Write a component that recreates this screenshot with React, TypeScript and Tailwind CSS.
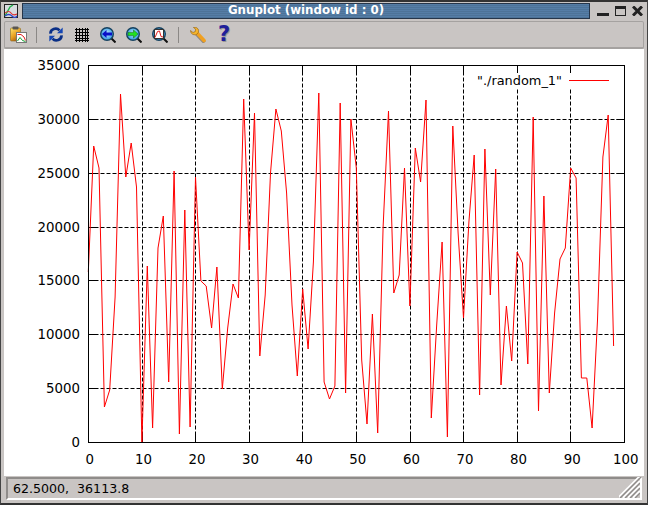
import type { ReactNode } from 'react';

// pixel y of each sample, x = 0..98
const samples = [
  272, 146, 168, 407, 390, 297, 94, 177, 143, 187, 442, 266, 428, 248, 216, 382, 171, 434, 210, 427,
  177, 281, 286, 328, 267, 389, 328, 284, 298, 99, 250, 113, 356, 295, 173, 109, 131, 193, 305, 376,
  289, 349, 262, 93, 382, 399, 386, 103, 393, 119, 168, 360, 424, 314, 433, 227, 111, 293, 275, 168,
  306, 148, 182, 100, 418, 325, 242, 437, 126, 233, 318, 222, 155, 395, 149, 295, 169, 385, 306, 361,
  252, 263, 364, 117, 411, 196, 393, 313, 259, 248, 168, 178, 378, 378, 428, 320, 157, 115, 346,
];

const plot = { left: 88.5, right: 624.5, top: 65.5, bottom: 442.5 };
const xAt = (v: number) => plot.left + (v / 100) * (plot.right - plot.left);
const yAt = (v: number) => plot.bottom - (v / 35000) * (plot.bottom - plot.top);
const xTicks = [0, 10, 20, 30, 40, 50, 60, 70, 80, 90, 100];
const yTicks = [0, 5000, 10000, 15000, 20000, 25000, 30000, 35000];

function Plot() {
  const points = samples.map((y, i) => `${(88.3 + 5.36 * i).toFixed(1)},${y}`).join(' ');
  return (
    <svg viewBox="4 49 640 427" className="block w-[640px] h-[427px]">
      <rect x="4" y="49" width="640" height="427" fill="#fff" />
      {/* grid */}
      {xTicks.slice(1, -1).map((t) => {
        const x = Math.floor(xAt(t)) + 0.5;
        return (
          <g key={t} stroke="#000">
            <line x1={x} x2={x} y1={plot.top} y2={plot.bottom} strokeDasharray="4 2" />
            <line x1={x} x2={x} y1={plot.top} y2={plot.top + 8} />
            <line x1={x} x2={x} y1={plot.bottom - 8} y2={plot.bottom} />
          </g>
        );
      })}
      {yTicks.slice(1, -1).map((t) => {
        const y = Math.floor(yAt(t)) + 0.5;
        return (
          <g key={t} stroke="#000">
            <line x1={plot.left} x2={plot.right} y1={y} y2={y} strokeDasharray="4 2" />
            <line x1={plot.left} x2={plot.left + 8} y1={y} y2={y} />
            <line x1={plot.right - 8} x2={plot.right} y1={y} y2={y} />
          </g>
        );
      })}
      {/* legend box clears the grid */}
      <rect x="472" y="73" width="140" height="15" fill="#fff" />
      <polyline points={points} fill="none" stroke="#ff0000" strokeWidth="1" />
      <rect
        x={plot.left}
        y={plot.top}
        width={plot.right - plot.left}
        height={plot.bottom - plot.top}
        fill="none"
        stroke="#000"
      />
      <g fill="#000" fontSize="13.33" fontFamily="'DejaVu Sans', sans-serif">
        {yTicks.map((t) => (
          <text key={t} x="80" y={Math.floor(yAt(t)) + 5} textAnchor="end">
            {t}
          </text>
        ))}
        {xTicks.map((t) => (
          <text key={t} x={xAt(t) + 1.3} y="464" textAnchor="middle">
            {t}
          </text>
        ))}
        <text x="562" y="85" textAnchor="end" fontSize="12.9">
          "./random_1"
        </text>
      </g>
      <line x1="569" x2="609" y1="80.5" y2="80.5" stroke="#ff0000" />
    </svg>
  );
}

function AppIcon() {
  return (
    <svg viewBox="0 0 14 14" className="w-[14px] h-[14px]">
      <rect x="0.5" y="0.5" width="13" height="13" fill="#d8dce0" stroke="#222" />
      <path d="M1 12 L6 3 L9 1" stroke="#22b14c" strokeWidth="1.4" fill="none" />
      <path d="M1 9 Q5 6 7 9 T13 10" stroke="#e03030" strokeWidth="1.2" fill="none" />
      <path d="M1 12 Q5 9 8 12 T13 12" stroke="#3048c8" strokeWidth="1.4" fill="none" />
    </svg>
  );
}

function ClipboardIcon() {
  return (
    <svg viewBox="0 0 17 17" className="w-[17px] h-[17px]">
      <defs>
        <linearGradient id="clip" x1="0" y1="0" x2="0.6" y2="1">
          <stop offset="0" stopColor="#ffe874" />
          <stop offset="0.6" stopColor="#e8a020" />
          <stop offset="1" stopColor="#a85a10" />
        </linearGradient>
      </defs>
      <rect x="0.5" y="2" width="10" height="13" rx="1" fill="url(#clip)" stroke="#8a6a20" strokeWidth="0.6" />
      <rect x="2.5" y="0.5" width="6" height="3" rx="1" fill="#5a5650" />
      <rect x="6.5" y="6.5" width="10" height="10" fill="#fff" stroke="#777" />
      <path d="M7.5 8.5 L11 8.5 L14 11 L15.5 14.5" stroke="#e02020" fill="none" />
      <path d="M7.5 15 L10 11.5 L12.5 14.5 L15.5 15.5" stroke="#10a030" fill="none" />
    </svg>
  );
}

function RefreshIcon() {
  return (
    <svg viewBox="0 0 14 15" className="w-[14px] h-[15px]" fill="none">
      <path d="M1.6 6.6 A5 4.6 0 0 1 10.5 3.4" stroke="#0a2f86" strokeWidth="2.8" />
      <path d="M8 6.2 L13.7 6.2 L13.7 0.6 Z" fill="#1546b4" />
      <path d="M12.4 8.4 A5 4.6 0 0 1 3.5 11.6" stroke="#0a2f86" strokeWidth="2.8" />
      <path d="M6 8.8 L0.3 8.8 L0.3 14.4 Z" fill="#1546b4" />
    </svg>
  );
}

function GridIcon() {
  return (
    <svg viewBox="0 0 14 14" className="w-[14px] h-[14px]" stroke="#000">
      {[1.5, 4.5, 7.5, 10.5, 12.5].map((p) => (
        <g key={p}>
          <line x1={p} x2={p} y1="0" y2="14" />
          <line y1={p} y2={p} x1="0" x2="14" />
        </g>
      ))}
    </svg>
  );
}

function Lens({ id, children }: { id: string; children: ReactNode }) {
  return (
    <svg viewBox="0 0 16 16" className="w-4 h-4">
      <defs>
        <radialGradient id={id} cx="0.5" cy="0.45" r="0.6">
          <stop offset="0" stopColor="#c4ecff" />
          <stop offset="1" stopColor="#1c8ee0" />
        </radialGradient>
      </defs>
      <line x1="11.5" y1="11.5" x2="15.5" y2="15.5" stroke="#111" strokeWidth="2" />
      <circle cx="7" cy="7" r="6.3" fill={`url(#${id})`} stroke="#17425f" strokeWidth="1.4" />
      {children}
    </svg>
  );
}

function Wrench() {
  return (
    <svg viewBox="0 0 16 16" className="w-4 h-4">
      <path d="M7 6 L15 14.5" stroke="#8a8580" strokeWidth="3.4" transform="translate(-0.5 1)" />
      <path d="M6.5 5.5 L14 13.5" stroke="#f0a020" strokeWidth="3.6" strokeLinecap="round" />
      <path
        d="M0.5 3.5 L3 5.5 L5.2 4.6 L5.6 2.2 L3.4 0.4 C5.6 -0.4 8.6 1 8.6 3.8 C8.6 6.3 6.6 8.2 4 7.8 C2 7.4 0.5 5.8 0.5 3.5 Z"
        fill="#f5b52c"
        stroke="#8c5a10"
        strokeWidth="0.6"
      />
    </svg>
  );
}

function Btn({ children }: { children: ReactNode }) {
  return <div className="w-[26px] h-[26px] flex items-center justify-center">{children}</div>;
}

function Sep() {
  return (
    <div className="w-3 h-[26px] flex items-center">
      <div className="ml-[5px] w-px h-4 bg-[#8b8886]" />
    </div>
  );
}

export default function App() {
  return (
    <div className="w-[648px] h-[505px] bg-[#c9c5c3] flex flex-col border-t-2 border-x border-b-2 border-t-[#333] border-x-[#444] border-b-[#333] font-['DejaVu_Sans',sans-serif] overflow-hidden">
      {/* title bar */}
      <div className="h-[17px] flex items-center px-[3px] shrink-0">
        <AppIcon />
        <div className="ml-[4px] w-[568px] h-[16px] flex items-center justify-center border border-[#26364a] bg-[repeating-linear-gradient(180deg,#557da6_0px,#557da6_1px,#4d7398_1px,#4d7398_2px)] text-white font-bold text-[11.8px] leading-none">
          Gnuplot (window id : 0)
        </div>
        <div className="ml-[7px] flex items-center gap-[6px]">
          <div className="w-3 h-[10px] flex items-end">
            <div className="w-3 h-[3px] bg-[#222]" />
          </div>
          <div className="w-[11px] h-[10px] border border-[#222] border-t-[3px]" />
          <svg viewBox="0 0 11 10" className="w-[11px] h-[10px]">
            <path d="M1 0.5 L10 9.5 M10 0.5 L1 9.5" stroke="#222" strokeWidth="3" />
          </svg>
        </div>
      </div>
      {/* toolbar */}
      <div className="mx-[3px] mt-[2px] h-[28px] flex items-center border border-[#a5a2a0] rounded-[2px] border-b-2 shrink-0">
        <Btn>
          <ClipboardIcon />
        </Btn>
        <Sep />
        <Btn>
          <RefreshIcon />
        </Btn>
        <Btn>
          <GridIcon />
        </Btn>
        <Btn>
          <Lens id="lensa">
            <path d="M2 7 L6.5 3 L6.5 5.4 L12 5.4 L12 8.6 L6.5 8.6 L6.5 11 Z" fill="#0a10c8" />
          </Lens>
        </Btn>
        <Btn>
          <Lens id="lensb">
            <path d="M12 7 L7.5 3 L7.5 5.4 L2 5.4 L2 8.6 L7.5 8.6 L7.5 11 Z" fill="#20e020" stroke="#106010" strokeWidth="0.5" />
          </Lens>
        </Btn>
        <Btn>
          <Lens id="lensc">
            <rect x="2.5" y="2.5" width="9" height="9" fill="#fff" stroke="#333" />
            <path d="M3 10.5 L5.5 4.5 L7.5 4 L9 9.5 L11 10" stroke="#e02020" fill="none" />
          </Lens>
        </Btn>
        <Sep />
        <Btn>
          <Wrench />
        </Btn>
        <Btn>
          <span className="text-[#20209a] font-bold text-[21px] leading-none [text-shadow:1px_1px_0_#9a9694]">?</span>
        </Btn>
      </div>
      {/* canvas */}
      <div className="mx-[3px] shrink-0">
        <Plot />
      </div>
      {/* status bar */}
      <div className="mx-[5px] mt-[1px] h-[23px] flex items-center pl-[5px] pt-px relative border-2 border-t-[#8f8c8a] border-l-[#8f8c8a] border-r-white border-b-white text-[12.6px] text-black whitespace-pre">
        <span>62.5000,  36113.8</span>
        <svg viewBox="0 0 21 21" className="absolute right-0 bottom-0 w-[21px] h-[21px]">
          {[4, 9, 14, 19].map((o) => (
            <g key={o}>
              <line x1={21} y1={21 - o - 3} x2={21 - o - 3} y2={21} stroke="#fff" strokeWidth="2" />
              <line x1={21} y1={21 - o - 1} x2={21 - o - 1} y2={21} stroke="#8f8c8a" strokeWidth="1.5" />
            </g>
          ))}
        </svg>
      </div>
    </div>
  );
}
